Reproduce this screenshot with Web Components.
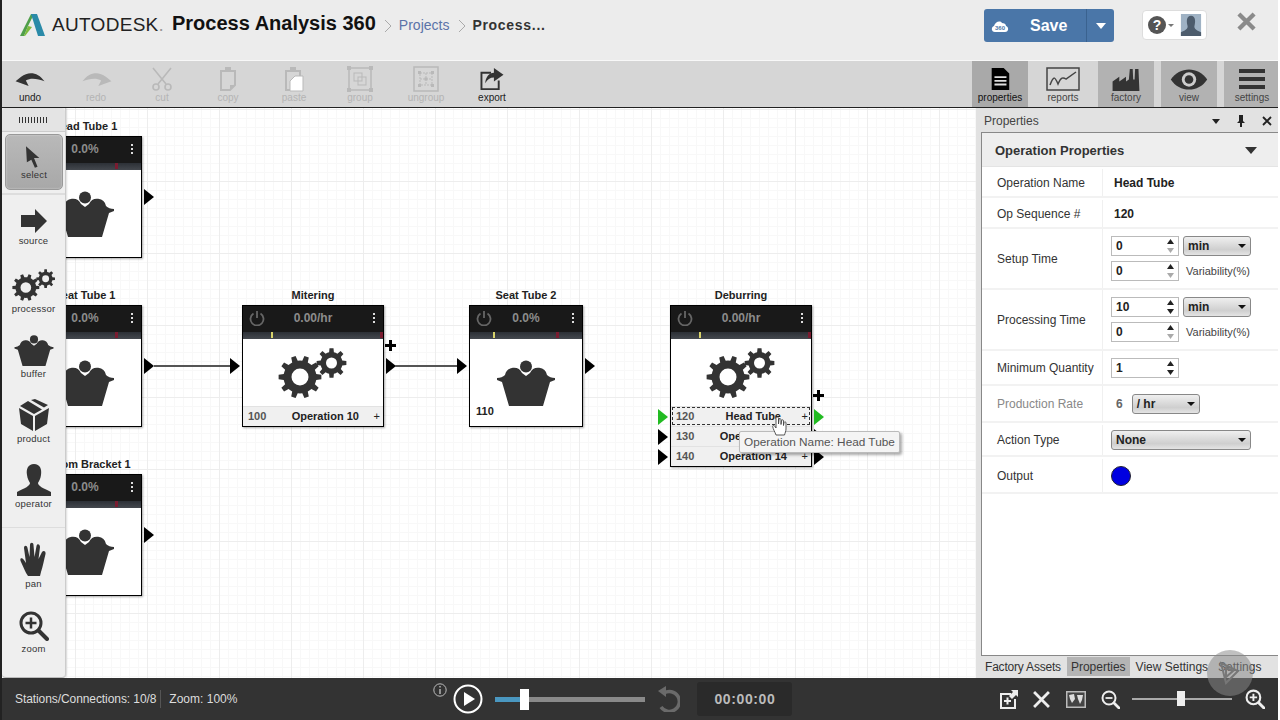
<!DOCTYPE html>
<html>
<head>
<meta charset="utf-8">
<title>Process Analysis 360</title>
<style>
html, body { margin: 0; height: 100%; overflow: hidden; }
body { font-family: "Liberation Sans", Arial, sans-serif; }
app-shell { width: 1280px; height: 720px; }
</style>
</head>
<body>
<app-shell>
  <app-header slot="header"></app-header>
  <app-toolbar slot="toolbar"></app-toolbar>
  <flow-canvas slot="canvas">
    <flow-node kind="buffer" title="Head Tube 1" pct="0.0%" style="left:26px;top:28px;width:114px" out></flow-node>
    <flow-node kind="buffer" title="Seat Tube 1" pct="0.0%" style="left:26px;top:197px;width:114px" out></flow-node>
    <flow-node kind="buffer" title="Bottom Bracket 1" pct="0.0%" style="left:26px;top:366px;width:114px" out></flow-node>
    <flow-node kind="proc" title="Mitering" pct="0.00/hr" style="left:240px;top:197px;width:142px" in out plus rows="100|Operation 10"></flow-node>
    <flow-node kind="buffer" title="Seat Tube 2" pct="0.0%" seq="110" style="left:467px;top:197px;width:114px" in out></flow-node>
    <flow-node kind="proc" title="Deburring" pct="0.00/hr" style="left:668px;top:197px;width:142px" rows="120|Head Tube,130|Operation 13,140|Operation 14" selected></flow-node>
    <flow-link style="left:152px;top:257px;width:76px"></flow-link>
    <flow-link style="left:393px;top:257px;width:62px"></flow-link>
    <flow-tip style="left:737px;top:323px">Operation Name: Head Tube</flow-tip>
    <flow-cursor style="left:770px;top:308px"></flow-cursor>
  </flow-canvas>
  <tool-palette slot="palette"></tool-palette>
  <props-panel slot="panel"></props-panel>
  <status-bar slot="status"></status-bar>
</app-shell>

<script>
const dark = "#333"

function gearPath(cx, cy, ro, ri, hole, teeth) {
    let d = ""
    const step = Math.PI * 2 / teeth
    for (let i = 0; i < teeth; i++) {
        const a = i * step
        const pts = [[ri, a - step * .5], [ri, a - step * .28], [ro, a - step * .17], [ro, a + step * .17], [ri, a + step * .28]]
        pts.forEach(([r, t], n) => {
            d += (i == 0 && n == 0 ? "M" : "L") + (cx + r * Math.cos(t)).toFixed(2) + " " + (cy + r * Math.sin(t)).toFixed(2)
        })
    }
    d += `Z M${cx - hole} ${cy} a${hole} ${hole} 0 1 0 ${hole * 2} 0 a${hole} ${hole} 0 1 0 ${hole * -2} 0Z`
    return d
}

// same art on palette and on the nodes
const gears = (w, h, fill = dark) => `<svg width="${w}" height="${h}" viewBox="0 0 70 50">
    <path fill-rule="evenodd" fill="${fill}" d="${gearPath(22, 29, 21.500, 16.500, 8.500, 10)}"/>
    <path fill-rule="evenodd" fill="${fill}" d="${gearPath(53.500, 15, 15, 11, 5.500, 8)}"/></svg>`

const bucket = (w, h, fill = dark) => `<svg width="${w}" height="${h}" viewBox="0 0 58 46">
    <circle cx="29" cy="6.500" r="6" fill="${fill}"/>
    <path fill="${fill}" d="M0 18Q5 18 8 15A9 9 0 0 1 25 13L29 16L33 13A9 9 0 0 1 50 15Q53 18 58 18L58 20L53 22L46 46H12L5 22L0 20Z"/></svg>`

const arrowRight = `<svg width="10" height="16" viewBox="0 0 10 16"><path d="M0 0L10 8L0 16Z" fill="currentColor"/></svg>`
const boldPlus = `<svg width="11" height="11" viewBox="0 0 11 11"><path fill="#000" d="M4 0H7V4H11V7H7V11H4V7H0V4H4Z"/></svg>`
const chevron = `<svg width="8" height="14" viewBox="0 0 8 14"><path fill="none" stroke="#aaa" d="M1 1L7 7L1 13"/></svg>`

const icons = {
    undo: c => `<svg width="31" height="14" viewBox="0 0 32 15"><path fill="${c}" d="M0 10L6 5C14 -1 24 0 31 10C24 7 16 6 11 9L14 15Z"/></svg>`,
    redo: c => `<svg width="31" height="14" viewBox="0 0 32 15"><path fill="${c}" d="M32 10L26 5C18 -1 8 0 1 10C8 7 16 6 21 9L18 15Z"/></svg>`,
    cut: c => `<svg width="22" height="24" viewBox="0 0 22 24"><g fill="none" stroke="${c}" stroke-width="1.600"><path d="M2 1L15 17M20 1L7 17"/><circle cx="5" cy="20" r="3"/><circle cx="17" cy="20" r="3"/></g></svg>`,
    copy: c => `<svg width="18" height="26" viewBox="0 0 18 26"><path fill="none" stroke="${c}" stroke-width="2" d="M2 5H16V19L11 24H2Z"/><rect x="6" y="1" width="6" height="5" fill="${c}"/><path fill="${c}" d="M11 24V19H16Z"/></svg>`,
    paste: c => `<svg width="20" height="26" viewBox="0 0 20 26"><path fill="none" stroke="${c}" stroke-width="2" d="M2 5H16V24H2Z"/><rect x="6" y="1" width="6" height="5" fill="${c}"/><path fill="#fff" stroke="${c}" d="M11 10H19V25H6V15Z"/></svg>`,
    group: c => `<svg width="26" height="26" viewBox="0 0 26 26"><g fill="none" stroke="${c}"><rect x="2" y="2" width="22" height="22" stroke-width="1.500"/><rect x="7" y="7" width="8" height="8"/><rect x="11" y="11" width="8" height="8"/></g><g fill="${c}"><rect width="4" height="4"/><rect x="22" width="4" height="4"/><rect y="22" width="4" height="4"/><rect x="22" y="22" width="4" height="4"/></g></svg>`,
    ungroup: c => `<svg width="26" height="26" viewBox="0 0 26 26"><g fill="none" stroke="${c}"><rect x="1" y="1" width="24" height="24" stroke-width="1.500"/><path d="M7 7H19V19H7Z M13 7V19 M7 13H19" stroke-dasharray="2 1"/></g><g fill="${c}"><rect x="5" y="5" width="3" height="3"/><rect x="18" y="5" width="3" height="3"/><rect x="5" y="18" width="3" height="3"/><rect x="18" y="18" width="3" height="3"/><rect x="11.500" y="11.500" width="3" height="3"/></g></svg>`,
    exportIcon: c => `<svg width="24" height="23" viewBox="0 0 24 24"><path fill="none" stroke="${c}" stroke-width="2" d="M11 5H1V22H19V13"/><path fill="${c}" d="M14 0L24 7L14 14V10C10 10 7 12 5 16C5 10 9 5 14 5Z"/></svg>`,
    properties: () => `<svg width="20" height="24" viewBox="0 0 20 26"><path fill="#000" d="M1 1H14L20 7V25H1Z"/><path stroke="#ddd" stroke-width="2" d="M4 11H17M4 15H17M4 19H17"/></svg>`,
    reports: c => `<svg width="34" height="24" viewBox="0 0 34 24"><rect x="1" y="1" width="32" height="22" fill="none" stroke="${c}" stroke-width="1.500"/><path fill="none" stroke="${c}" stroke-width="1.500" d="M4 18C8 8 9 10 12 17C15 10 17 10 20 12L30 5"/></svg>`,
    factory: c => `<svg width="28" height="23" viewBox="0 0 28 24"><path fill="${c}" d="M0 24V14L7 9V14L14 9V14L17 12L18 1H21L21.500 12H23L23.500 1H27L28 24Z"/></svg>`,
    view: () => `<svg width="38" height="23" viewBox="0 0 38 24"><path fill="#333" d="M0 12C9 -2 29 -2 38 12C29 26 9 26 0 12Z"/><circle cx="19" cy="12" r="7.500" fill="#ccc"/><circle cx="19" cy="12" r="4.500" fill="#333"/></svg>`,
    settings: () => `<svg width="26" height="20" viewBox="0 0 26 20"><path fill="#333" d="M0 0H26V4H0ZM0 8H26V12H0ZM0 16H26V20H0Z"/></svg>`,
    select: () => `<svg width="16" height="22" viewBox="0 0 18 24"><path fill="#333" d="M0 0L15 13L9 13L13 23L10 24L6 15L1 18Z"/></svg>`,
    source: () => `<svg width="26" height="24" viewBox="0 0 26 24"><path fill="#333" d="M0 6H14V0L26 12L14 24V18H0Z"/></svg>`,
    product: () => `<svg width="32" height="32" viewBox="0 0 32 32"><path fill="#333" d="M1 9L15 17V32L3 25ZM17 17L31 9L29 25L17 32ZM2 7L10 2L24 10.500L16 15ZM13 1L17 0L30 6L26 8.500Z"/></svg>`,
    operator: () => `<svg width="34" height="32" viewBox="0 0 34 32"><path fill="#333" d="M17 0C23 0 25 5 24 11C23.500 15 22 17 21 19C21 22 26 24 34 28V32H0V28C8 24 13 22 13 19C12 17 10.500 15 10 11C9 5 11 0 17 0Z"/></svg>`,
    pan: () => `<svg width="28" height="34" viewBox="0 0 28 34"><path fill="#333" d="M8 34C5 30 4 26 1 20C-1 16 2 15 4 18L6 21L4 6C4 3 7 3 7.500 6L9.500 15L10 3C10 0 13.500 0 13.500 3L14.500 15L16.500 4C17 1 20 2 20 5L18.500 17L22 10C23.500 8 26 9 25.500 12C24 18 23 24 21 30L20 34Z"/></svg>`,
    zoom: () => `<svg width="30" height="30" viewBox="0 0 30 30"><circle cx="12" cy="12" r="10" fill="none" stroke="#333" stroke-width="3"/><path stroke="#333" stroke-width="2.500" d="M6.500 12H17.500M12 6.500V17.500"/><path stroke="#333" stroke-width="4" stroke-linecap="round" d="M19.500 19.500L28 28"/></svg>`
}

// wraps the element definition so each component just hands in css + html
function shadow(el, css, html) {
    el.attachShadow({ mode: "open" }).innerHTML = `<style>${css}</style>${html}`
}

class AppShell extends HTMLElement {
    constructor() {
        super()
        shadow(this, `
:host { display: grid; grid-template-rows: 61px 47px 570px 42px; grid-template-columns: 1fr; background: #fff; box-sizing: border-box; border-left: 2px solid #222; border-right: 2px solid #fff; overflow: hidden; }
.main { display: flex; position: relative; min-height: 0; }
.pal { position: absolute; left: 0; top: 0; bottom: 0; z-index: 3; display: flex; }
.cv { flex: 1; display: flex; min-width: 0; }
`, `
<slot name="header"></slot>
<slot name="toolbar"></slot>
<div class="main">
  <div class="pal"><slot name="palette"></slot></div>
  <div class="cv"><slot name="canvas"></slot></div>
  <slot name="panel"></slot>
</div>
<slot name="status"></slot>`)
    }
}

class AppHeader extends HTMLElement {
    constructor() {
        super()
        shadow(this, `
:host { display: flex; align-items: flex-start; background: #ececec; border-bottom: 1px solid #f8f8f8; box-sizing: border-box; color: #111; padding: 11px 22px 0 18px; font-family: "Liberation Sans", sans-serif; }
svg.a { margin-top: 2px; }
.logo { font-size: 19px; letter-spacing: .3px; color: #222; margin-left: 7px; margin-top: 3px; width: 111px; white-space: nowrap; }
.logo i { font-style: normal; color: #999; }
.app { font-size: 20px; font-weight: bold; margin-left: 9px; white-space: nowrap; margin-top: 1px; }
.sep { display: flex; margin: 8px 7px 0 8px; }
.sep.b { margin: 8px 6px 0 9px; }
.crumb { font-size: 14px; color: #5b73a8; margin-top: 6px; }
.cur { font-size: 14px; font-weight: bold; color: #333; margin-top: 6px; letter-spacing: .7px; }
.fill { flex: 1; }
.save { display: flex; width: 130px; height: 33px; background: #4a76a8; border-radius: 3px; color: #fff; font-weight: bold; font-size: 16px; align-items: center; margin-top: -2px; }
.save .l { flex: 1; display: flex; align-items: center; padding-left: 7px; gap: 21px; height: 100%; }
.save .r { width: 27px; height: 100%; border-left: 1px solid #3a628f; display: flex; align-items: center; justify-content: center; }
.help { width: 65px; height: 30px; margin: -1px 0 0 28px; border: 1px solid #ddd; border-radius: 4px; background: #fff; display: flex; align-items: center; box-sizing: border-box; padding-left: 5px; }
.help .car { margin: 0 6px 0 2px; }
.x { margin: 1px 0 0 30px; }
`, `
<svg class="a" width="25" height="24" viewBox="0 0 25 24"><path fill="#4f9f4a" d="M0 23L11 1H14L8 13L4 23Z"/><path fill="#2a8aa8" d="M11 1H17L25 23H18Z"/><path fill="#7dbb3c" d="M4 23L8 13L12 14L5 23Z"/></svg>
<span class="logo">AUTODESK<i>.</i></span>
<span class="app">Process Analysis 360</span>
<span class="sep">${chevron}</span><span class="crumb">Projects</span>
<span class="sep b">${chevron}</span><span class="cur">Process...</span>
<span class="fill"></span>
<div class="save"><div class="l"><svg width="18" height="12" viewBox="0 0 18 12"><path fill="#fff" d="M4 12C0 12 0 7 3 6C4 2 9 0 11 3C15 3 15 6 15 6C18 7 18 12 14 12Z"/><text x="9" y="10" text-anchor="middle" font-family="Liberation Sans" font-size="6" fill="#4a76a8">360</text></svg><span>Save</span></div>
<div class="r"><svg width="10" height="6"><path d="M0 0H10L5 6Z" fill="#fff"/></svg></div></div>
<div class="help"><svg width="18" height="18" viewBox="0 0 18 18"><circle cx="9" cy="9" r="9" fill="#555"/><text x="9" y="14" text-anchor="middle" font-family="Liberation Sans" font-weight="bold" font-size="14" fill="#fff">?</text></svg>
<svg class="car" width="6" height="3"><path d="M0 0H6L3 3Z" fill="#777"/></svg>
<svg width="22" height="22" viewBox="0 0 22 24"><rect width="22" height="24" fill="#9fb2c4"/><path fill="#4d5c6c" d="M11 2C16 2 16 8 15 12C14 15 15 17 22 20V24H0V20C7 17 8 15 7 12C6 8 6 2 11 2Z"/></svg></div>
<svg class="x" width="19" height="19" viewBox="0 0 20 20"><path stroke="#8a8a8a" stroke-width="4.500" d="M2 2L18 18M18 2L2 18"/></svg>`)
    }
}

class ToolButton extends HTMLElement {
    constructor() {
        super()
        shadow(this, `
:host { display: flex; flex-direction: column; align-items: center; justify-content: flex-end; width: 66px; height: 100%; box-sizing: border-box; padding-bottom: 4px; font-size: 10px; color: #222; }
:host([off]) { color: #b4b4b4; }
:host([active]) { background: #a9a9a9; }
.i { flex: 1; display: flex; align-items: center; justify-content: center; padding-top: 5px; }
`, `<div class="i"><slot></slot></div><span id="t"></span>`)
    }
    connectedCallback() {
        this.shadowRoot.getElementById("t").textContent = this.getAttribute("label")
    }
}

class AppToolbar extends HTMLElement {
    constructor() {
        super()
        const off = "#b9b9b9"
        const left = [["undo", icons.undo("#333")], ["redo", icons.redo(off), 1], ["cut", icons.cut(off), 1], ["copy", icons.copy(off), 1], ["paste", icons.paste(off), 1], ["group", icons.group(off), 1], ["ungroup", icons.ungroup(off), 1], ["export", icons.exportIcon("#333")]]
        const right = [["properties", icons.properties(), 0, 1], ["reports", icons.reports("#444")], ["factory", icons.factory("#333"), 0, 1], ["view", icons.view(), 0, 1], ["settings", icons.settings(), 0, 1]]
        shadow(this, `
:host { display: flex; background: #d6d6d6; border-bottom: 1px solid #222; box-sizing: border-box; font-family: "Liberation Sans", sans-serif; }
.g { display: flex; height: 46px; margin-left: -5px; }
.r { margin-left: auto; gap: 7px; margin-right: -2px; }
.r tool-button { width: 56px; color: #444; }
.r tool-button[active] { background: #b2b2b2; }
.r tool-button:first-child[active] { background: #a9a9a9; color: #111; }
`, `<div class="g">${left.map(([l, i, o]) => `<tool-button label="${l}" ${o ? "off" : ""}>${i}</tool-button>`).join("")}</div>
<div class="g r">${right.map(([l, i, o, a]) => `<tool-button label="${l}" ${a ? "active" : ""}>${i}</tool-button>`).join("")}</div>`)
    }
}

class ToolPalette extends HTMLElement {
    constructor() {
        super()
        const item = (l, i, h) => `<div class="it" style="height:${h}px">${i}<span>${l}</span></div>`
        shadow(this, `
:host { display: flex; flex-direction: column; width: 64px; background: #efefef; border-right: 1px solid #ccc; border-bottom: 1px solid #bbb; border-radius: 0 0 4px 4px; box-sizing: border-box; font-family: "Liberation Sans", sans-serif; font-size: 9.500px; color: #333; letter-spacing: .2px; box-shadow: 1px 0 2px #0002; }
.grip { height: 23px; background: #e4e4e4; border-bottom: 1px solid #ccc; border-radius: 4px 4px 0 0; display: flex; justify-content: center; align-items: center; }
.sel { margin: 2px 2px 3px 3px; height: 56px; background: linear-gradient(#b9b9b9, #a8a8a8); border: 1px solid #999; border-radius: 5px; display: flex; flex-direction: column; align-items: center; justify-content: flex-end; gap: 1px; padding-bottom: 9px; box-sizing: border-box; color: #333; box-shadow: inset 0 0 2px #fff8; }
.hr { border-top: 2px solid #ddd; }
.it { display: flex; flex-direction: column; align-items: center; justify-content: flex-end; gap: 2px; padding-bottom: 3px; box-sizing: border-box; }
.sp { flex: 1; }
`, `<div class="grip"><svg width="30" height="6"><path stroke="#333" stroke-dasharray="1 2" stroke-width="6" d="M0 3H30"/></svg></div>
<div class="sel">${icons.select()}<span>select</span></div>
<div class="hr"></div>
${item("source", icons.source(), 54)}
${item("processor", gears(44, 32), 68)}
${item("buffer", bucket(40, 31), 65)}
${item("product", icons.product(), 65)}
${item("operator", icons.operator(), 65)}
<div class="hr" style="border-top-width:1px;margin-top:15px"></div>
${item("pan", icons.pan(), 64)}
${item("zoom", icons.zoom(), 65)}
<div class="sp"></div>`)
    }
}

class FlowCanvas extends HTMLElement {
    constructor() {
        super()
        shadow(this, `
:host { display: block; flex: 1; position: relative; overflow: hidden; background-color: #fff;
  background-image: linear-gradient(#ededed 1px, transparent 1px), linear-gradient(90deg, #ededed 1px, transparent 1px), linear-gradient(#f8f8f8 1px, transparent 1px), linear-gradient(90deg, #f8f8f8 1px, transparent 1px);
  background-size: 72px 72px, 72px 72px, 9px 9px, 9px 9px; background-position: 1px 1px; }
`, `<slot></slot>`)
    }
}

class FlowNode extends HTMLElement {
    constructor() {
        super()
        this.attachShadow({ mode: "open" })
    }
    connectedCallback() {
        const a = n => this.getAttribute(n)
        const isProc = a("kind") == "proc"
        const rows = (a("rows") || "").split(",").filter(Boolean).map(r => r.split("|"))
        const sel = this.hasAttribute("selected")
        const rowsHtml = rows.map(([seq, name], i) => `<div class="row ${sel && i == 0 ? "sel" : ""}"><b class="s">${seq}</b><b class="n">${name}</b><b class="p">+</b></div>`).join("")
        const ports = []
        if (this.hasAttribute("in")) ports.push(`<span class="port" style="left:-12px;top:53px">${arrowRight}</span>`)
        if (this.hasAttribute("out")) ports.push(`<span class="port" style="right:-12px;top:53px">${arrowRight}</span>`)
        if (this.hasAttribute("plus")) ports.push(`<span class="port" style="right:-12px;top:35px">${boldPlus}</span>`)
        if (sel) {
            rows.forEach((r, i) => {
                const c = i == 0 ? "#22bb22" : "#000"
                ports.push(`<span class="port" style="left:-12px;top:${104 + i * 20}px;color:${c}">${arrowRight}</span>`)
                ports.push(`<span class="port" style="right:-12px;top:${104 + i * 20}px;color:${c}">${arrowRight}</span>`)
            })
            ports.push(`<span class="port" style="right:-12px;top:85px">${boldPlus}</span>`)
        }
        this.shadowRoot.innerHTML = `<style>
:host { display: block; position: absolute; font-family: "Liberation Sans", sans-serif; }
.title { position: absolute; left: -30px; right: -30px; top: -16px; text-align: center; font-size: 11px; font-weight: bold; color: #222; white-space: nowrap; }
.box { background: #fff; border: 1px solid #000; box-shadow: 1px 1px 2px #0005; box-sizing: border-box; display: flex; flex-direction: column; height: ${isProc ? 102 + rows.length * 20 : 122}px; }
.head { height: 26px; background: #191919; color: #8c8c8c; font-size: 12px; font-weight: bold; display: flex; align-items: center; justify-content: space-between; box-sizing: border-box; padding: 0 6px 3px; position: relative; }
.head .t { position: absolute; left: 0; right: 0; text-align: center; }
.dots { width: 2px; height: 2px; background: #ddd; box-shadow: 0 -4px #ddd, 0 4px #ddd; margin: 0 2px 0 0; }
.bar { height: 7px; background: linear-gradient(#2c3036, #44484e); position: relative; }
.bar i { position: absolute; top: 0; height: 6px; }
.art { flex: 1; display: flex; align-items: center; justify-content: center; position: relative; }
.seq { position: absolute; left: 6px; bottom: 9px; font-size: 11px; font-weight: bold; color: #222; }
.row { height: 20px; background: #f0f0f0; border-top: 1px solid #e2e2e2; box-sizing: border-box; display: flex; align-items: center; font-size: 11px; padding: 0 3px 1px 5px; position: relative; color: #222; }
.row.sel { outline: 1px dashed #333; outline-offset: -2px; }
.s { color: #555; width: 30px; }
.n { flex: 1; text-align: center; padding-right: 1px; white-space: nowrap; }
.p { font-weight: normal; font-size: 11px; }
.port { position: absolute; color: #000; display: flex; }
</style>
<div class="title">${a("title")}</div>
<div class="box">
  <div class="head">
    <svg width="16" height="16" viewBox="0 0 16 16"><path fill="none" stroke="#666" stroke-width="1.800" d="M4.500 3.500a6.500 6.500 0 1 0 7 0M8 1V8"/></svg>
    <span class="t">${a("pct")}</span><span class="dots"></span>
  </div>
  <div class="bar"><i style="left:${isProc ? 28 : 23}px;width:2px;background:#d7d26a"></i><i style="right:${isProc ? 0 : 23}px;width:3px;background:#7a1c30"></i></div>
  <div class="art">${isProc ? gears(70, 50) : bucket(58, 46)}${a("seq") ? `<span class="seq">${a("seq")}</span>` : ""}</div>
  ${rowsHtml}
</div>
${ports.join("")}`
    }
}

class FlowLink extends HTMLElement {
    constructor() {
        super()
        shadow(this, `:host { display: block; position: absolute; height: 2px; background: #555; }`, "")
    }
}

class FlowTip extends HTMLElement {
    constructor() {
        super()
        shadow(this, `:host { display: block; position: absolute; height: 22px; line-height: 20px; padding: 0 4px; box-sizing: border-box; background: #f4f4f4; border: 1px solid #bbb; box-shadow: 2px 2px 3px #0005; border-radius: 2px; font-family: "Liberation Sans", sans-serif; font-size: 11.800px; color: #555; white-space: nowrap; z-index: 2; }`, `<slot></slot>`)
    }
}

class FlowCursor extends HTMLElement {
    constructor() {
        super()
        shadow(this, `:host { display: block; position: absolute; width: 16px; height: 20px; z-index: 2; }`,
            `<svg width="16" height="20" viewBox="0 0 16 20"><path fill="#fff" stroke="#444" stroke-width=".9" d="M4 19C3 16 1 13 .700 10.500C.500 9 2 9 3 10.500L4 12V2.500C4 .500 6.500 .500 6.500 2.500V8L7 3.500C7 2.500 9 2.500 9 3.800V8.500L9.500 4.500C9.800 3.500 11.500 3.500 11.500 5V9.500L12 6.500C12.500 5.500 14 5.500 14 7V13C14 15 13 17 12.500 19Z"/></svg>`)
    }
}

class NumField extends HTMLElement {
    constructor() {
        super()
        this.attachShadow({ mode: "open" })
    }
    connectedCallback() {
        this.shadowRoot.innerHTML = `<style>
:host { display: flex; align-items: center; width: 68px; height: 20px; box-sizing: border-box; border: 1px solid #bbb; background: #fff; font-size: 12px; font-weight: bold; color: #222; padding: 0 4px; }
span { flex: 1; }
svg { display: block; }
</style><span>${this.getAttribute("value")}</span><svg width="7" height="14" viewBox="0 0 7 14"><path fill="#222" d="M0 5L3.500 0L7 5Z"/><path fill="${this.hasAttribute("dim") ? "#aaa" : "#222"}" d="M0 9H7L3.500 14Z"/></svg>`
    }
}

class SelectField extends HTMLElement {
    constructor() {
        super()
        this.attachShadow({ mode: "open" })
    }
    connectedCallback() {
        this.shadowRoot.innerHTML = `<style>
:host { display: flex; align-items: center; height: 20px; box-sizing: border-box; border: 1px solid #888; border-radius: 3px; background: linear-gradient(#efefef, #cfcfcf 70%, #e4e4e4); font-size: 12px; font-weight: bold; color: #222; padding: 0 4px; }
span { flex: 1; }
</style><span>${this.getAttribute("value")}</span><svg width="8" height="4"><path d="M0 0H8L4 4Z" fill="#111"/></svg>`
    }
}

class PropRow extends HTMLElement {
    constructor() {
        super()
        this.attachShadow({ mode: "open" })
    }
    connectedCallback() {
        const h = this.getAttribute("h")
        this.shadowRoot.innerHTML = `<style>
:host { display: flex; height: ${h}px; box-sizing: border-box; border-bottom: 2px solid #f2f2f2; font-size: 12px; color: ${this.hasAttribute("dim") ? "#888" : "#333"}; }
:host([pad]) { padding-top: 2px; }
.l { width: 121px; box-sizing: border-box; padding-left: 15px; border-right: 1px solid #f0f0f0; display: flex; align-items: center; }
.v { flex: 1; padding-left: 8px; display: flex; flex-direction: column; justify-content: center; gap: 5px; color: #222; font-weight: bold; }
</style><div class="l">${this.getAttribute("label")}</div><div class="v"><slot></slot></div>`
    }
}

class PropsPanel extends HTMLElement {
    constructor() {
        super()
        const timeRows = a => `
<div class="ln"><num-field value="${a}" ${a == "0" ? "dim" : ""}></num-field><select-field value="min" style="width:68px"></select-field></div>
<div class="ln"><num-field value="0" dim></num-field><span class="var">Variability(%)</span></div>`
        shadow(this, `
:host { display: flex; flex-direction: column; width: 302px; background: #e2e2e2; box-sizing: border-box; font-family: "Liberation Sans", sans-serif; color: #333; }
.tbar { height: 24px; box-sizing: border-box; padding-top: 2px; display: flex; align-items: center; font-size: 12px; padding-left: 8px; gap: 4px; color: #444; flex: none; }
.tbar .dots { flex: 1; height: 5px; background-image: radial-gradient(#bbb 35%, transparent 40%); background-size: 2px 2px; margin-right: 12px; }
.tbar svg { margin-right: 13px; }
.tbar svg:last-child { margin-right: 6px; }
.card { flex: 1; background: #fff; border: 1px solid #888; border-right: 0; margin-left: 5px; min-height: 0; }
.h2 { height: 34px; box-sizing: border-box; padding-top: 2px; display: flex; align-items: center; justify-content: space-between; background: #eee; padding-left: 13px; padding-right: 21px; font-size: 13px; font-weight: bold; color: #333; border-bottom: 1px solid #e4e4e4; }
.ln { display: flex; align-items: center; gap: 4px; }
.tx { padding-left: 3px; }
.var { font-size: 11px; font-weight: normal; color: #444; margin-left: 3px; }
.tabs { height: 22px; display: flex; font-size: 12px; color: #333; padding-left: 4px; flex: none; }
.tabs span { padding: 0 5px; height: 19px; line-height: 20px; margin-top: 1px; }
.tabs .f { letter-spacing: -.2px; margin-right: 1px; }
.tabs .on { background: #b4b4b4; padding: 0 4px; margin-right: 1px; }
.circle { width: 20px; height: 20px; border-radius: 50%; background: #0000e0; border: 1px solid #223; box-sizing: border-box; }
`, `
<div class="tbar"><span>Properties</span><span class="dots"></span>
  <svg width="8" height="5"><path d="M0 0H8L4 5Z" fill="#222"/></svg>
  <svg width="8" height="12" viewBox="0 0 8 12"><path fill="#222" d="M2 0H6V6L8 8H5V12H3V8H0L2 6Z"/></svg>
  <svg width="10" height="10" viewBox="0 0 10 10"><path stroke="#222" stroke-width="1.800" d="M1 1L9 9M9 1L1 9"/></svg></div>
<div class="card">
  <div class="h2"><span>Operation Properties</span><svg width="12" height="7"><path d="M0 0H12L6 7Z" fill="#333"/></svg></div>
  <prop-row label="Operation Name" h="31" pad><span class="tx">Head Tube</span></prop-row>
  <prop-row label="Op Sequence #" h="31" pad><span class="tx">120</span></prop-row>
  <prop-row label="Setup Time" h="61">${timeRows("0")}</prop-row>
  <prop-row label="Processing Time" h="61">${timeRows("10")}</prop-row>
  <prop-row label="Minimum Quantity" h="35"><div class="ln"><num-field value="1"></num-field></div></prop-row>
  <prop-row label="Production Rate" h="37" dim><div class="ln" style="gap:9px"><span style="color:#666;margin-left:5px;font-size:12px">6</span><select-field value="/ hr" style="width:68px"></select-field></div></prop-row>
  <prop-row label="Action Type" h="34" pad><select-field value="None" style="width:140px"></select-field></prop-row>
  <prop-row label="Output" h="37" pad><div class="circle"></div></prop-row>
</div>
<div class="tabs"><span class="f">Factory Assets</span><span class="on">Properties</span><span>View Settings</span><span>Settings</span></div>`)
    }
}

class StatusBar extends HTMLElement {
    constructor() {
        super()
        shadow(this, `
:host { display: flex; align-items: center; background: #333; color: #ddd; font-family: "Liberation Sans", sans-serif; font-size: 12px; position: relative; box-sizing: border-box; padding-left: 13px; }
.st { letter-spacing: -.08px; }
.sep { width: 1px; height: 18px; background: #555; margin: 0 8px 0 4px; }
.info { position: absolute; left: 431px; top: 5px; }
.play { margin-left: 216px; display: flex; }
.slider { width: 150px; height: 5px; background: #8a8a8a; position: relative; margin-left: 12px; }
.slider i { position: absolute; left: 0; top: 0; bottom: 0; width: 25px; background: #4a97c0; }
.slider b { position: absolute; left: 25px; top: -8px; width: 9px; height: 21px; background: #fff; }
.re { margin-left: 11px; display: flex; }
.time { width: 95px; height: 34px; margin-left: 17px; background: #2a2a2a; border-radius: 3px; display: flex; align-items: center; justify-content: center; font-size: 14px; font-weight: bold; color: #bbb; letter-spacing: .6px; }
.right { position: absolute; left: 997px; top: 0; bottom: 0; display: flex; align-items: center; }
.right > * { flex: none; }
.zs { width: 100px; height: 2px; background: #aaa; position: relative; margin: 0 13px 0 12px; }
.zs b { position: absolute; left: 45px; top: -7px; width: 8px; height: 15px; background: #eee; }
.wm { position: absolute; left: 1205px; top: -28px; width: 46px; height: 46px; border-radius: 50%; background: #8888; display: flex; align-items: center; justify-content: center; }
`, `
<span class="st">Stations/Connections: 10/8</span><span class="sep"></span><span>Zoom: 100%</span>
<svg class="info" width="14" height="14" viewBox="0 0 14 14"><circle cx="7" cy="7" r="6.200" fill="none" stroke="#bbb"/><path stroke="#bbb" stroke-width="1.400" d="M7 6V11M7 3V4.500"/></svg>
<span class="play"><svg width="30" height="30" viewBox="0 0 30 30"><circle cx="15" cy="15" r="13.500" fill="none" stroke="#fff" stroke-width="2"/><path fill="#fff" d="M11 8L22 15L11 22Z"/></svg></span>
<div class="slider"><i></i><b></b></div>
<span class="re"><svg width="24" height="26" viewBox="0 0 24 26"><path fill="none" stroke="#6a6a6a" stroke-width="3.500" d="M8 7A10 10 0 1 1 5 21"/><path fill="#6a6a6a" d="M10 0V11L2 5Z"/></svg></span>
<div class="time">00:00:00</div>
<div class="right">
  <svg width="19" height="19" viewBox="0 0 19 19" style="margin-right:15px"><path fill="none" stroke="#eee" stroke-width="2" d="M12 4H2V18H16V9"/><path stroke="#eee" stroke-width="2" d="M5 11H12M8.500 7.500V14.500"/><path fill="#eee" d="M12 0H19V7L17 5L13 9L10 6L14 2Z"/></svg>
  <svg width="17" height="17" viewBox="0 0 16 16" style="margin-right:16px"><path stroke="#eee" stroke-width="2.600" d="M1 1L15 15M15 1L1 15"/></svg>
  <svg width="20" height="17" viewBox="0 0 20 17" style="margin-right:15px"><rect width="20" height="17" fill="#bbb"/><rect x="1.500" y="1.500" width="17" height="14" fill="#444"/><path fill="#ddd" d="M3 4L8 3L9 8L6 12L4 8ZM11 4L17 4L16 9L14 13L12 8Z"/></svg>
  <svg width="19" height="19" viewBox="0 0 19 19"><circle cx="8" cy="8" r="6.500" fill="none" stroke="#eee" stroke-width="2"/><path stroke="#eee" stroke-width="1.800" d="M4.500 8H11.500"/><path stroke="#eee" stroke-width="2.800" stroke-linecap="round" d="M13 13L18 18"/></svg>
  <div class="zs"><b></b></div>
  <svg width="20" height="20" viewBox="0 0 19 19"><circle cx="8" cy="8" r="6.500" fill="none" stroke="#eee" stroke-width="2"/><path stroke="#eee" stroke-width="1.800" d="M4.500 8H11.500M8 4.500V11.500"/><path stroke="#eee" stroke-width="2.800" stroke-linecap="round" d="M13 13L18 18"/></svg>
</div>
<div class="wm"><svg width="20" height="24" viewBox="0 0 20 24"><path fill="none" stroke="#777" stroke-width="2" d="M1 2L18 10L6 22ZM6 7L13 10L6 16Z"/></svg></div>`)
    }
}

customElements.define("app-shell", AppShell)
customElements.define("app-header", AppHeader)
customElements.define("tool-button", ToolButton)
customElements.define("app-toolbar", AppToolbar)
customElements.define("tool-palette", ToolPalette)
customElements.define("flow-canvas", FlowCanvas)
customElements.define("flow-node", FlowNode)
customElements.define("flow-link", FlowLink)
customElements.define("flow-tip", FlowTip)
customElements.define("flow-cursor", FlowCursor)
customElements.define("num-field", NumField)
customElements.define("select-field", SelectField)
customElements.define("prop-row", PropRow)
customElements.define("props-panel", PropsPanel)
customElements.define("status-bar", StatusBar)
</script>
</body>
</html>
